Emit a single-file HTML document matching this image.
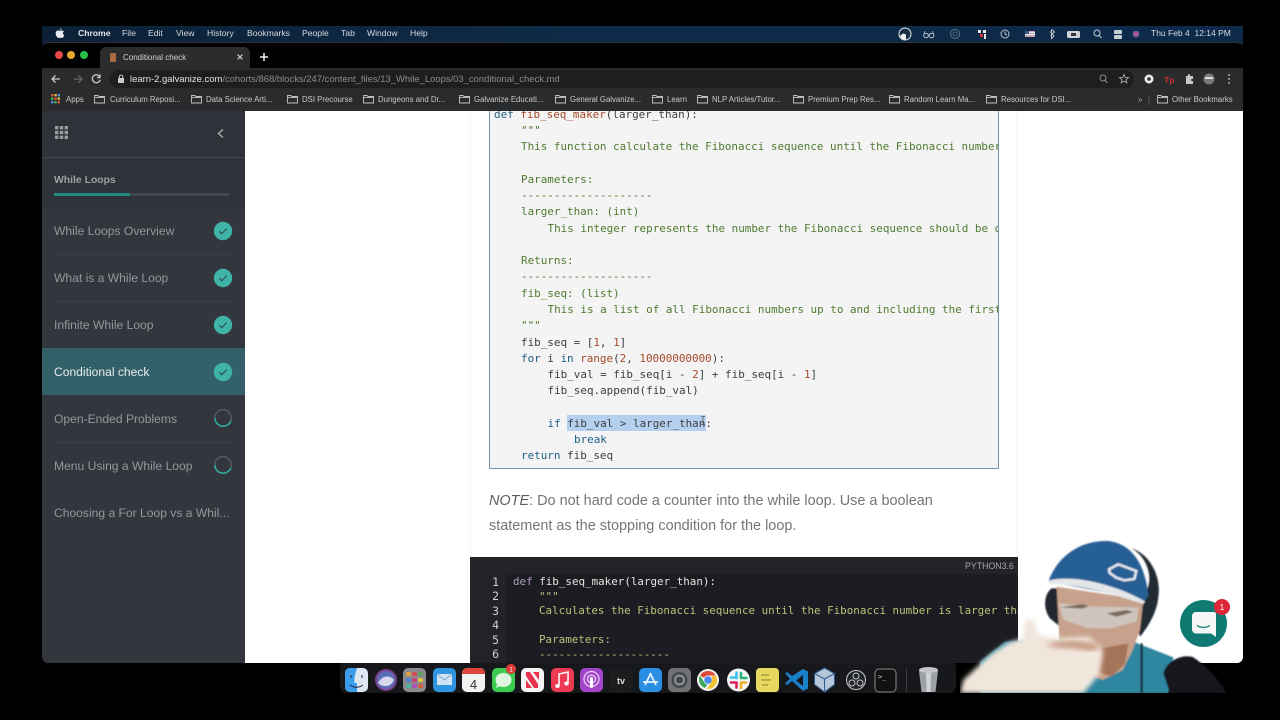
<!DOCTYPE html>
<html><head><meta charset="utf-8"><style>
*{margin:0;padding:0;box-sizing:border-box}
html,body{width:1280px;height:720px;overflow:hidden;background:#000;font-family:"Liberation Sans",sans-serif}
body{position:relative;filter:blur(.3px)}
.a{position:absolute;white-space:pre}
.mb{top:26px;height:16px;line-height:15px;font-size:8.6px;color:#d5dbe0}
.bm{top:93.5px;height:12px;line-height:12px;font-size:7.8px;color:#c8c9ca}
.c{position:absolute;white-space:pre;font:10.93px/16px "DejaVu Sans Mono",monospace;color:#3c4043;height:16px}
.s{color:#4f7b30}.k{color:#1f5f86}.f{color:#a5492a}.n{color:#a5492a}
.d{position:absolute;white-space:pre;font:10.88px/14px "DejaVu Sans Mono",monospace;color:#e4e4dc;height:14px}
.y{color:#bcc27a}
.ln{position:absolute;left:480px;width:19px;text-align:right;font:11.5px/14px "DejaVu Sans Mono",monospace;color:#cfcfcf}
.nav{position:absolute;left:54px;font-size:12.1px;line-height:16px;color:#94989d;white-space:pre}
</style></head><body>

<!-- menu bar -->
<div class="a" style="left:42px;top:26px;width:1201px;height:18px;background:linear-gradient(90deg,#0c2138,#0e2a48 45%,#0d2a4a)"></div>
<svg class="a" style="left:55px;top:28px" width="10" height="11" viewBox="0 0 10 11"><path d="M6.6 0.4c.1.9-.7 2-1.7 2C4.800 1.500 5.600.5 6.600.4ZM5 3c.6 0 1.100-.5 2-.5.800 0 1.500.4 1.900 1-1.500.9-1.200 3 .4 3.600-.5 1.300-1.300 2.900-2.300 2.900-.7 0-1-.4-1.800-.4s-1.100.4-1.800.4C2.200 10 .7 7.400.7 5.400.7 3.500 1.900 2.500 3.100 2.500c.8 0 1.400.5 1.900.5Z" fill="#e8ebee"/></svg>
<div class="a mb" style="left:78px;font-weight:bold;color:#e3e6ea">Chrome</div>
<div class="a mb" style="left:122px">File</div>
<div class="a mb" style="left:148px">Edit</div>
<div class="a mb" style="left:176px">View</div>
<div class="a mb" style="left:207px">History</div>
<div class="a mb" style="left:247px">Bookmarks</div>
<div class="a mb" style="left:302px">People</div>
<div class="a mb" style="left:341px">Tab</div>
<div class="a mb" style="left:367px">Window</div>
<div class="a mb" style="left:410px">Help</div>
<svg class="a" style="left:895px;top:26px" width="260" height="16" viewBox="0 0 260 16">
<circle cx="10" cy="8" r="6" fill="#1a3048" stroke="#e6e9ec" stroke-width="1"/><path d="M5 10a5 5 0 0 0 6 3.500V8.500l-3-1Z" fill="#f2f2f2"/>
<circle cx="31" cy="9.500" r="2.300" fill="none" stroke="#b9c1c9"/><circle cx="36.500" cy="9.500" r="2.300" fill="none" stroke="#b9c1c9"/><path d="M29 8l1-3M38.500 8l-1-3" stroke="#b9c1c9" stroke-width=".7"/>
<circle cx="60" cy="8" r="4.500" fill="none" stroke="#5e7487"/><circle cx="60" cy="8" r="2" fill="none" stroke="#4a6074"/>
<rect x="83" y="4" width="3" height="3" fill="#e6e6e6"/><rect x="88" y="4" width="3" height="3" fill="#e6e6e6"/><rect x="85" y="8" width="3" height="3" fill="#d33"/><rect x="89" y="8" width="2" height="5" fill="#e6e6e6"/>
<circle cx="110" cy="8" r="4" fill="none" stroke="#b9c1c9"/><path d="M110 5.500V8l2 1" fill="none" stroke="#b9c1c9"/>
<rect x="130" y="5" width="10" height="6" fill="#c9a6b4"/><rect x="130" y="6" width="10" height="1" fill="#e8e8ee"/><rect x="130" y="8" width="10" height="1" fill="#e8e8ee"/><rect x="130" y="5" width="4" height="3" fill="#345a8a"/>
<path d="M157 3.500l2.500 2.500-4 4M155 5.500l4 4.500-2.500 2.500V3.500" fill="none" stroke="#c9ced3" stroke-width=".9"/>
<rect x="172" y="5" width="13" height="7" rx="1.500" fill="#cfd4d8"/><rect x="176" y="7" width="5" height="3" fill="#334"/>
<circle cx="202" cy="7" r="3" fill="none" stroke="#c9ced3"/><path d="M204 9.500l2.500 2.500" stroke="#c9ced3"/>
<rect x="219" y="4" width="8" height="4" rx="1" fill="#c9ced3"/><rect x="219" y="9" width="8" height="4" rx="1" fill="#c9ced3"/>
<circle cx="241" cy="8" r="3.500" fill="#6a5aa5"/><circle cx="241" cy="8" r="1.500" fill="#e5507a"/>
</svg>
<div class="a mb" style="left:1151px;font-size:8.5px;color:#d6dade">Thu Feb 4  12:14 PM</div>

<!-- window chrome -->
<div class="a" style="left:42px;top:42px;width:1201px;height:26px;background:#000;border-radius:7px 7px 0 0;border-top:1px solid #333"></div>
<div class="a" style="left:55px;top:51px;width:8px;height:8px;border-radius:50%;background:#e8494a"></div>
<div class="a" style="left:67px;top:51px;width:8px;height:8px;border-radius:50%;background:#e9a92f"></div>
<div class="a" style="left:80px;top:51px;width:8px;height:8px;border-radius:50%;background:#28bd48"></div>
<div class="a" style="left:100px;top:47px;width:150px;height:21px;background:#2b2c2e;border-radius:6px 6px 0 0"></div>
<div class="a" style="left:110px;top:53px;width:6px;height:9px;background:#a9683f;border-radius:1px"></div>
<div class="a" style="left:123px;top:51px;height:14px;line-height:14px;font-size:8px;color:#d2d3d4">Conditional check</div>
<svg class="a" style="left:236px;top:53px" width="8" height="8" viewBox="0 0 8 8"><path d="M1.500 1.500l5 5M6.500 1.500l-5 5" stroke="#d8d8d8" stroke-width="1.100"/></svg>
<svg class="a" style="left:259px;top:52px" width="10" height="10" viewBox="0 0 10 10"><path d="M5 1v8M1 5h8" stroke="#f0f0f0" stroke-width="1.500"/></svg>

<!-- toolbar -->
<div class="a" style="left:42px;top:68px;width:1201px;height:21px;background:#2a2b2d"></div>
<svg class="a" style="left:50px;top:72px" width="56" height="14" viewBox="0 0 56 14"><path d="M10 7H2M5.500 3.500L2 7l3.500 3.500" fill="none" stroke="#c9cacb" stroke-width="1.300"/><path d="M24 7h8M28.500 3.500L32 7l-3.500 3.500" fill="none" stroke="#66686a" stroke-width="1.300"/><path d="M49.500 4.300a4 4 0 1 0 .7 3.500M50 2.500v3h-3" fill="none" stroke="#c9cacb" stroke-width="1.300"/></svg>
<div class="a" style="left:110px;top:70px;width:1024px;height:18px;background:#1d1e20;border-radius:9px"></div>
<svg class="a" style="left:117px;top:74px" width="8" height="10" viewBox="0 0 8 10"><rect x="1" y="4" width="6" height="5" fill="#c9cacb"/><path d="M2.300 4V2.800a1.700 1.700 0 0 1 3.400 0V4" fill="none" stroke="#c9cacb"/></svg>
<div class="a" style="left:130px;top:73px;height:14px;line-height:14px;font-size:9.45px;color:#8a8c8e"><span style="color:#e0e1e2">learn-2.galvanize.com</span>/cohorts/868/blocks/247/content_files/13_While_Loops/03_conditional_check.md</div>
<svg class="a" style="left:1098px;top:72px" width="138" height="14" viewBox="0 0 138 14">
<circle cx="5" cy="6" r="3" fill="none" stroke="#8a8c8e"/><path d="M7 8.500l2.500 2.500" stroke="#8a8c8e"/>
<path d="M26 2.500l1.300 3 3.200.2-2.500 2 .8 3.100-2.800-1.700-2.800 1.700.8-3.100-2.500-2 3.200-.2Z" fill="none" stroke="#aaacad" stroke-width=".9"/>
<circle cx="51" cy="7" r="4.500" fill="#e8e8e8"/><circle cx="51" cy="7" r="1.800" fill="#333"/>
<text x="66" y="11" font-family="Liberation Sans" font-size="8.500" font-weight="bold" fill="#c9302f">Tp</text>
<path d="M88 4h2V3a1 1 0 0 1 2 0v1h3v3h-1a1 1 0 0 0 0 2h1v3h-7Z" fill="#c5c6c7"/>
<circle cx="111" cy="7" r="5.500" fill="#77797b"/><rect x="107" y="5" width="8" height="2" fill="#ddd"/>
<circle cx="131" cy="3" r=".9" fill="#c9cacb"/><circle cx="131" cy="7" r=".9" fill="#c9cacb"/><circle cx="131" cy="11" r=".9" fill="#c9cacb"/>
</svg>

<!-- bookmarks -->
<div class="a" style="left:42px;top:89px;width:1201px;height:22px;background:#2a2b2d"></div>
<svg class="a" style="left:51px;top:94px" width="9" height="10" viewBox="0 0 9 10"><g><rect x="0" y="0" width="2.400" height="2.400" fill="#d9503f"/><rect x="3.300" y="0" width="2.400" height="2.400" fill="#e8b93c"/><rect x="6.600" y="0" width="2.400" height="2.400" fill="#4a90d9"/><rect x="0" y="3.500" width="2.400" height="2.400" fill="#4caf50"/><rect x="3.300" y="3.500" width="2.400" height="2.400" fill="#d9503f"/><rect x="6.600" y="3.500" width="2.400" height="2.400" fill="#e8b93c"/><rect x="0" y="7" width="2.400" height="2.400" fill="#4a90d9"/><rect x="3.300" y="7" width="2.400" height="2.400" fill="#4caf50"/><rect x="6.600" y="7" width="2.400" height="2.400" fill="#d9503f"/></g></svg>
<div class="a bm" style="left:66px">Apps</div>
<svg width="0" height="0" style="position:absolute"><defs><g id="fo"><path d="M.5 1.500h3.500l1 1h5.500v6.500H.5Z" fill="none" stroke="#c0c1c2" stroke-width=".9"/><path d="M.5 3.500h10" stroke="#c0c1c2" stroke-width=".9"/></g></defs></svg>
<svg class="a" style="left:42px;top:94px" width="1201" height="12"><use href="#fo" x="52"/><use href="#fo" x="149"/><use href="#fo" x="245"/><use href="#fo" x="321"/><use href="#fo" x="417"/><use href="#fo" x="513"/><use href="#fo" x="610"/><use href="#fo" x="655"/><use href="#fo" x="751"/><use href="#fo" x="847"/><use href="#fo" x="944"/><use href="#fo" x="1115"/><path d="M1107 1v10" stroke="#555"/></svg>
<div class="a bm" style="left:110px">Curriculum Reposi...</div>
<div class="a bm" style="left:206px">Data Science Arti...</div>
<div class="a bm" style="left:302px">DSI Precourse</div>
<div class="a bm" style="left:378px">Dungeons and Dr...</div>
<div class="a bm" style="left:474px">Galvanize Educati...</div>
<div class="a bm" style="left:570px">General Galvanize...</div>
<div class="a bm" style="left:667px">Learn</div>
<div class="a bm" style="left:712px">NLP Articles/Tutor...</div>
<div class="a bm" style="left:808px">Premium Prep Res...</div>
<div class="a bm" style="left:904px">Random Learn Ma...</div>
<div class="a bm" style="left:1001px">Resources for DSI...</div>
<div class="a bm" style="left:1138px;color:#aaa">»</div>
<div class="a bm" style="left:1172px">Other Bookmarks</div>

<!-- sidebar -->
<div class="a" style="left:42px;top:111px;width:203px;height:552px;background:#33363d;border-radius:0 0 0 6px"></div>
<div class="a" style="left:42px;top:111px;width:203px;height:97px;background:#2f3238"></div>
<div class="a" style="left:42px;top:157px;width:203px;height:1px;background:#43464c"></div>
<svg class="a" style="left:55px;top:126px" width="14" height="14" viewBox="0 0 14 14" fill="#9a9ca1"><rect width="3.400" height="3.400" x="0" y="0"/><rect width="3.400" height="3.400" x="4.800" y="0"/><rect width="3.400" height="3.400" x="9.600" y="0"/><rect width="3.400" height="3.400" x="0" y="4.800"/><rect width="3.400" height="3.400" x="4.800" y="4.800"/><rect width="3.400" height="3.400" x="9.600" y="4.800"/><rect width="3.400" height="3.400" x="0" y="9.600"/><rect width="3.400" height="3.400" x="4.800" y="9.600"/><rect width="3.400" height="3.400" x="9.600" y="9.600"/></svg>
<svg class="a" style="left:216px;top:128px" width="9" height="11" viewBox="0 0 9 11"><path d="M7 1.500L2.500 5.500 7 9.500" fill="none" stroke="#a8aaae" stroke-width="1.400"/></svg>
<div class="a" style="left:54px;top:173px;height:15px;line-height:15px;font-size:10.400px;font-weight:bold;color:#9da0a5">While Loops</div>
<div class="a" style="left:54px;top:193px;width:175px;height:3px;background:#43464c"></div>
<div class="a" style="left:54px;top:193px;width:76px;height:3px;background:#1e8c81"></div>
<div class="a" style="left:54px;top:254px;width:178px;height:1px;background:#3d4046"></div>
<div class="a" style="left:54px;top:301px;width:178px;height:1px;background:#3d4046"></div>
<div class="a" style="left:54px;top:442px;width:178px;height:1px;background:#3d4046"></div>
<div class="a" style="left:42px;top:348px;width:203px;height:47px;background:#34606a"></div>
<div class="nav" style="top:223px">While Loops Overview</div>
<div class="nav" style="top:270px">What is a While Loop</div>
<div class="nav" style="top:317px">Infinite While Loop</div>
<div class="nav" style="top:364px;color:#e6eced">Conditional check</div>
<div class="nav" style="top:411px">Open-Ended Problems</div>
<div class="nav" style="top:458px">Menu Using a While Loop</div>
<div class="nav" style="top:505px">Choosing a For Loop vs a Whil...</div>
<svg class="a" style="left:212px;top:220px" width="22" height="260" viewBox="0 0 22 260">
<g id="ck"><circle cx="11" cy="11" r="9.200" fill="#3fb3a8"/><path d="M7.300 11.300l2.400 2.400 5-5" fill="none" stroke="#2c3a42" stroke-width="1"/></g>
<use href="#ck" y="47"/><use href="#ck" y="94"/><use href="#ck" y="141"/>
<circle cx="11" cy="198" r="8.300" fill="none" stroke="#5b5e64" stroke-width="1.300"/><path d="M2.900 198a8.300 8.300 0 0 0 15.900 3.200" fill="none" stroke="#2fb0a4" stroke-width="1.500"/>
<circle cx="11" cy="245" r="8.300" fill="none" stroke="#5b5e64" stroke-width="1.300"/><path d="M2.900 245a8.300 8.300 0 0 0 15.900 3.200" fill="none" stroke="#2fb0a4" stroke-width="1.500"/>
</svg>

<!-- content -->
<div class="a" style="left:245px;top:111px;width:998px;height:552px;background:#fff;border-radius:0 0 6px 0"></div>
<div class="a" style="left:1017px;top:111px;width:1px;height:446px;background:#f2f2f2"></div>
<div class="a" style="left:470px;top:111px;width:1px;height:446px;background:#f6f6f6"></div>

<div style="position:absolute;left:489px;top:111px;width:510px;height:358px;overflow:hidden">
<div style="position:absolute;left:0;top:-11px;width:510px;height:369px;background:#f4f4f4;border:1px solid #6f93b3;overflow:hidden">
<div class="c" style="left:4px;top:6px"><span class="k">def</span> <span class="f">fib_seq_maker</span>(larger_than):</div>
<div class="c s" style="left:31px;top:22px">"""</div>
<div class="c s" style="left:31px;top:38px">This function calculate the Fibonacci sequence until the Fibonacci number is larger than the input</div>
<div class="c s" style="left:31px;top:71px">Parameters:</div>
<div class="c s" style="left:31px;top:87px">--------------------</div>
<div class="c s" style="left:31px;top:103px">larger_than: (int)</div>
<div class="c s" style="left:57.500px;top:120px">This integer represents the number the Fibonacci sequence should be over</div>
<div class="c s" style="left:31px;top:152px">Returns:</div>
<div class="c s" style="left:31px;top:168px">--------------------</div>
<div class="c s" style="left:31px;top:185px">fib_seq: (list)</div>
<div class="c s" style="left:57.500px;top:201px">This is a list of all Fibonacci numbers up to and including the first over the input</div>
<div class="c s" style="left:31px;top:217px">"""</div>
<div class="c" style="left:31px;top:234px">fib_seq = [<span class="n">1</span>, <span class="n">1</span>]</div>
<div class="c" style="left:31px;top:250px"><span class="k">for</span> i <span class="k">in</span> <span class="f">range</span>(<span class="n">2</span>, <span class="n">10000000000</span>):</div>
<div class="c" style="left:57.500px;top:266px">fib_val = fib_seq[i - <span class="n">2</span>] + fib_seq[i - <span class="n">1</span>]</div>
<div class="c" style="left:57.500px;top:282px">fib_seq.append(fib_val)</div>
<div style="position:absolute;left:77px;top:314px;width:139px;height:16px;background:#b5d0ee"></div>
<div class="c" style="left:57.500px;top:315px"><span class="k">if</span> fib_val &gt; larger_than:</div>
<div class="c k" style="left:84px;top:331px">break</div>
<div class="c" style="left:31px;top:347px"><span class="k">return</span> fib_seq</div>
</div></div>
<svg class="a" style="left:700px;top:416px" width="6" height="10" viewBox="0 0 6 10"><path d="M1 .5h4M3 .5v8M1 8.500h4" stroke="#555" stroke-width=".8" fill="none"/></svg>
<div class="a" style="left:489px;top:489px;height:25px;line-height:25px;font-size:14.45px;color:#737578"><i style="color:#5a5c5f">NOTE</i>: Do not hard code a counter into the while loop. Use a boolean</div>
<div class="a" style="left:489px;top:514px;height:25px;line-height:25px;font-size:14.45px;color:#737578">statement as the stopping condition for the loop.</div>

<div class="a" style="left:470px;top:557px;width:548px;height:106px;background:#1b1d22;overflow:hidden"></div>
<div class="a" style="left:470px;top:557px;width:548px;height:17px;background:#222429"></div>
<div class="a" style="left:470px;top:574px;width:37px;height:89px;background:#212328"></div>
<div class="a" style="left:965px;top:560px;height:12px;line-height:12px;font-size:8.800px;color:#a3a5a8">PYTHON3.6</div>
<div class="ln" style="top:574.500px">1</div><div class="ln" style="top:589px">2</div><div class="ln" style="top:603.500px">3</div><div class="ln" style="top:618px">4</div><div class="ln" style="top:632.500px">5</div><div class="ln" style="top:647px">6</div>
<div style="position:absolute;left:470px;top:574px;width:548px;height:89px;overflow:hidden">
<div class="d" style="left:43px;top:1px"><span style="color:#b79fc0">def</span> fib_seq_maker(larger_than):</div>
<div class="d y" style="left:69px;top:15.500px">"""</div>
<div class="d y" style="left:69px;top:30px">Calculates the Fibonacci sequence until the Fibonacci number is larger than</div>
<div class="d y" style="left:69px;top:59px">Parameters:</div>
<div class="d y" style="left:69px;top:73.500px">--------------------</div>
</div>

<!-- chat bubble -->
<div class="a" style="left:1180px;top:600px;width:47px;height:47px;border-radius:50%;background:#0e7a72"></div>
<svg class="a" style="left:1192px;top:612px" width="24" height="25" viewBox="0 0 24 25"><path d="M4 0h18a2 2 0 0 1 2 2v23l-5-3.500H4a4 4 0 0 1-4-4V4a4 4 0 0 1 4-4Z" fill="#f5f7f7"/><path d="M5 13.500c3.500 2.500 9 2.500 13 0" fill="none" stroke="#0e7a72" stroke-width="1.300"/></svg>
<div class="a" style="left:1214px;top:599px;width:16px;height:16px;border-radius:50%;background:#dc2739;color:#fff;font-size:8.500px;line-height:16px;text-align:center">1</div>

<!-- dock -->
<svg class="a" style="left:340px;top:663px" width="620" height="31" viewBox="340 663 620 31">
<rect x="340" y="660" width="616" height="34" rx="8" fill="#16181c"/>
<rect x="470" y="661" width="548" height="2" fill="#3a3c40"/>
<!-- finder -->
<rect x="345" y="668" width="23" height="24" rx="5" fill="#dde8f2"/><path d="M350 668h7c-2 6-3 11-2.500 15H357v9h-7a5 5 0 0 1-5-5v-14a5 5 0 0 1 5-5Z" fill="#3b9dea"/><path d="M351 675v3M362 675v3M350 685c4 3 9 3 13 0" stroke="#223" fill="none"/>
<!-- siri -->
<circle cx="386" cy="680" r="10" fill="#5a6fb5"/><circle cx="386" cy="680" r="10" fill="none" stroke="#7d3f8f" stroke-width="2"/><path d="M378 683c4-8 12-8 16-3-3 7-11 8-16 3Z" fill="#d9d9ee"/>
<!-- launchpad -->
<rect x="403" y="668" width="23" height="24" rx="5" fill="#8a8a8c"/><g><rect x="406" y="672" width="5" height="4" rx="1" fill="#e0a040"/><rect x="412" y="672" width="5" height="4" rx="1" fill="#d05050"/><rect x="418" y="672" width="5" height="4" rx="1" fill="#60a060"/><rect x="406" y="678" width="5" height="4" rx="1" fill="#5080d0"/><rect x="412" y="678" width="5" height="4" rx="1" fill="#d04080"/><rect x="418" y="678" width="5" height="4" rx="1" fill="#e0c040"/><rect x="406" y="684" width="5" height="4" rx="1" fill="#50b0a0"/><rect x="412" y="684" width="5" height="4" rx="1" fill="#b050c0"/><rect x="418" y="684" width="5" height="4" rx="1" fill="#d06040"/></g>
<!-- mail -->
<rect x="433" y="668" width="23" height="24" rx="5" fill="#2f95e0"/><rect x="437" y="674" width="15" height="11" fill="#cfe3f3"/><path d="M437 674l7.500 6 7.500-6" stroke="#7fa9c9" fill="none"/>
<!-- calendar -->
<rect x="462" y="668" width="23" height="24" rx="5" fill="#f2f2f2"/><path d="M467 668h13a5 5 0 0 1 5 5v1h-23v-1a5 5 0 0 1 5-5Z" fill="#e0453c"/><text x="473.500" y="689" font-size="13" text-anchor="middle" font-family="Liberation Sans" fill="#333">4</text>
<!-- messages -->
<rect x="492" y="668" width="23" height="24" rx="5" fill="#3ccb50"/><ellipse cx="503.500" cy="680" rx="8" ry="7" fill="#dff5e0"/><path d="M497 684l-1 4 4-2Z" fill="#dff5e0"/>
<circle cx="511" cy="669" r="5" fill="#e23a3a"/><text x="511" y="671.500" font-size="6.500" text-anchor="middle" font-family="Liberation Sans" fill="#fff">1</text>
<!-- news -->
<rect x="521" y="668" width="23" height="24" rx="5" fill="#f4f4f4"/><path d="M526 672h4l8 12v4h-4l-8-12Z" fill="#e8304f"/><path d="M533 672h6v8ZM526 680l6 8h-6Z" fill="#e8304f"/>
<!-- music -->
<rect x="551" y="668" width="23" height="24" rx="5" fill="#ec3a53"/><path d="M559 686v-12l9-2v11" fill="none" stroke="#fff" stroke-width="1.500"/><ellipse cx="557.500" cy="686" rx="2.300" ry="2" fill="#fff"/><ellipse cx="566.500" cy="683.500" rx="2.300" ry="2" fill="#fff"/>
<!-- podcasts -->
<rect x="580" y="668" width="23" height="24" rx="5" fill="#a246c9"/><circle cx="591.500" cy="679" r="7.500" fill="none" stroke="#e8d0f2" stroke-width="1.300"/><circle cx="591.500" cy="679" r="4" fill="none" stroke="#e8d0f2" stroke-width="1.300"/><rect x="590" y="677" width="3" height="11" rx="1.500" fill="#fff"/>
<!-- tv -->
<rect x="610" y="668" width="23" height="24" rx="5" fill="#1b1c1e"/><text x="621" y="684" font-size="9" text-anchor="middle" font-family="Liberation Sans" font-weight="bold" fill="#ddd">tv</text>
<!-- app store -->
<rect x="639" y="668" width="23" height="24" rx="5" fill="#2a8fe2"/><path d="M651 673l-6 12M650 673l6 12M643 682h15" stroke="#e8f3fb" stroke-width="1.800" fill="none"/>
<!-- prefs -->
<rect x="668" y="668" width="23" height="24" rx="5" fill="#6f7173"/><circle cx="679.500" cy="680" r="8" fill="#44474a"/><circle cx="679.500" cy="680" r="4.500" fill="none" stroke="#909294" stroke-width="2"/>
<!-- chrome -->
<circle cx="708" cy="680" r="11" fill="#f5f5f5"/><path d="M708 671a9 9 0 0 1 7.800 4.500H708a4.500 4.500 0 0 0-4 2.500l-3.800-2.800A9 9 0 0 1 708 671Z" fill="#e04a3b"/><path d="M700 675.500l4 6.500a4.500 4.500 0 0 0 3.500 2.500L704.800 688A9 9 0 0 1 700 675.500Z" fill="#3aa757"/><path d="M716 676a9 9 0 0 1-9 13l4-7a4.500 4.500 0 0 0 0-6Z" fill="#f2c230"/><circle cx="708" cy="680" r="3.800" fill="#4a8af2"/>
<!-- slack -->
<circle cx="738.500" cy="680" r="11.500" fill="#f5f5f5"/><g stroke-width="2.600" stroke-linecap="round" fill="none"><path d="M736.500 672.500v5.500M731 677.500h5" stroke="#36c5f0"/><path d="M741 673v5M741 678h5.500" stroke="#2eb67d"/><path d="M741 688v-5.500M746 682.500h-5" stroke="#ecb22e"/><path d="M736.500 687.500v-5M731 682.500h5.500" stroke="#e01e5a"/></g>
<!-- stickies -->
<rect x="756" y="668" width="23" height="24" rx="4" fill="#e8d860"/><path d="M761 675h8M761 680h10M762 685h6" stroke="#8a7f30" fill="none"/>
<!-- vscode -->
<path d="M803 669l5 2.500v17l-5 2.500-11-10-5 4-2-1.500 5-5-5-5 2-1.500 5 4Z" fill="#1b7fc9"/><path d="M803 675l-7 5.500 7 5.500Z" fill="#16181c"/>
<!-- vbox -->
<path d="M824.500 668l10 5.500v11l-10 7.500-10-7.500v-11Z" fill="#b8c6da" stroke="#2c5b8f"/><path d="M814.500 673.500l10 5.500 10-5.500M824.500 679v12" stroke="#2c5b8f" fill="none"/>
<!-- obs -->
<circle cx="856" cy="680" r="9.500" fill="#22252a" stroke="#c8c8c8"/><circle cx="856" cy="676" r="3" fill="none" stroke="#c8c8c8"/><circle cx="852" cy="683" r="3" fill="none" stroke="#c8c8c8"/><circle cx="860" cy="683" r="3" fill="none" stroke="#c8c8c8"/>
<!-- terminal -->
<rect x="875" y="669" width="21" height="23" rx="4" fill="#111" stroke="#8a8a8a"/><text x="878" y="679" font-size="7" font-family="DejaVu Sans Mono" fill="#ddd">&gt;_</text>
<rect x="906" y="668" width="1" height="24" fill="#3a3c40"/>
<!-- trash -->
<path d="M919 671h19l-2.500 21h-14Z" fill="#9ca1a5"/><path d="M926 671h5l-.5 21h-4Z" fill="#d0d2d3"/><ellipse cx="928.500" cy="670" rx="9.500" ry="3" fill="#c2c4c6"/>
</svg>

<!-- webcam person -->
<svg class="a" style="left:960px;top:530px" width="300" height="165" viewBox="0 0 900 495">
<defs><filter id="bl" x="-5%" y="-5%" width="110%" height="110%"><feGaussianBlur stdDeviation="2.500"/></filter><filter id="bl2" x="-10%" y="-10%" width="120%" height="120%"><feGaussianBlur stdDeviation="7"/></filter></defs>
<g filter="url(#bl)">
<path d="M60 395L135 335 240 330 520 335 640 382 625 490H365L60 490Z" fill="#2f86a0"/>
<path d="M275 175c-22 15-28 60-5 90l30 25-5-115Z" fill="#20262e"/>
<path d="M555 190c30-45 5-110-40-135 50 15 90 80 80 145-3 45-30 90-55 120l-10-30Z" fill="#232a33"/>
<path d="M290 170l260 40-10 90-22 60-30 60-60 30-70-30-60-90Z" fill="#c7a18b"/>
<path d="M296 220l110 10 130 2-6 42-80 22-70-2-70-25Z" fill="#cfc5bd"/>
<path d="M300 232l70-10 15 8-20 6ZM440 250l60-10 20 6-50 14Z" fill="#7c6a5f"/>
<path d="M395 360l110-20-10 60-40 40-60-20Z" fill="#a5755a"/>
<path d="M265 155c30-85 105-125 180-122 65 8 110 60 120 165l-15 20-110-30-130-25Z" fill="#275f94"/>
<path d="M265 152c70-20 200 10 290 62l-5 8c-80-25-180-60-280-60Z" fill="#e4e7e8"/>
<path d="M447 118l28-15 32 12 22 8-6 24-30 4-24-8-20-14Z" fill="none" stroke="#e8eef2" stroke-width="7"/>
<path d="M610 430c8-38 60-60 90-48 35 22 80 70 100 108H630Z" fill="#17191d"/>
<path d="M545 340v150" stroke="#15171a" stroke-width="6"/>
</g>
<path d="M0 490L10 450 90 375 145 338 190 325 195 272 222 270 235 315 300 325 385 320 430 360 420 430 370 490Z" fill="#f1e6dc" filter="url(#bl2)"/>
<path d="M255 345c50-18 110-15 150-5 20 10 10 25-20 22-45-8-90-5-130-17Z" fill="#c9a08a" filter="url(#bl2)"/>
</svg>
<div class="a" style="left:0;top:693px;width:1280px;height:27px;background:#000"></div>
</body></html>
